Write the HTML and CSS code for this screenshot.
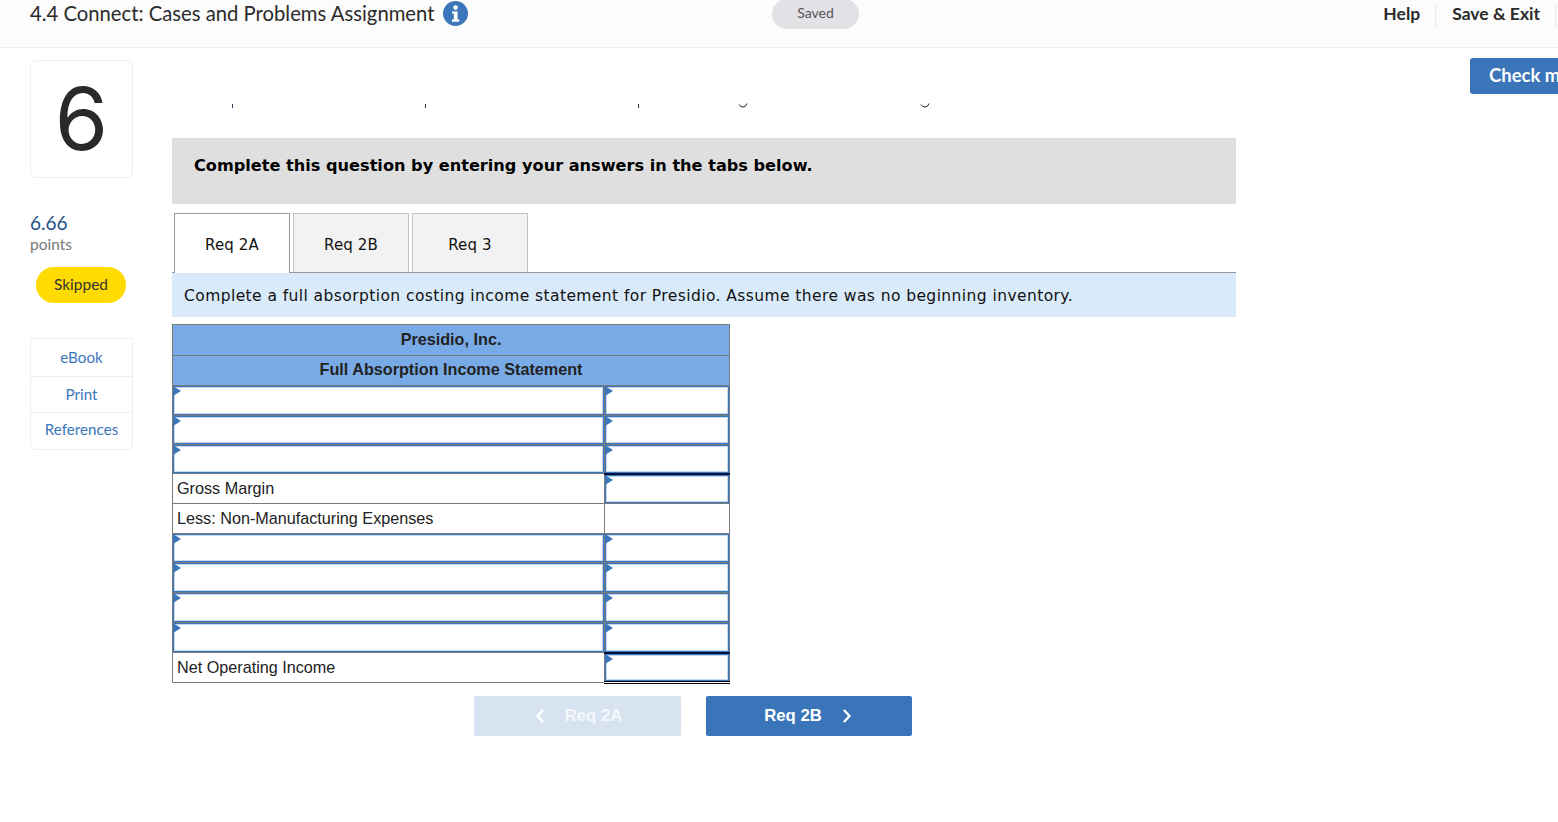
FILE: index.html
```html
<!DOCTYPE html>
<html lang="en">
<head>
<meta charset="utf-8">
<title>4.4 Connect: Cases and Problems Assignment</title>
<link rel="stylesheet" href="styles.css">
</head>
<body>
<header class="topbar">
  <div class="title">
    <span>4.4 Connect: Cases and Problems Assignment</span>
    <svg class="info" viewBox="0 0 25 25" aria-hidden="true"><circle cx="12.5" cy="12.5" r="12.5" fill="#3b76ba"/><circle cx="12.6" cy="6.6" r="2.3" fill="#fff"/><path d="M9 10.400h5.600v8.200h1.700v2.200H9v-2.200h1.800v-6H9z" fill="#fff"/></svg>
  </div>
  <div class="saved">Saved</div>
  <nav class="topnav">
    <a class="topnav-help">Help</a>
    <a class="topnav-save">Save &amp; Exit</a>
  </nav>
</header>
<div class="page">
  <aside class="side">
    <div class="qnum">6</div>
    <div class="pts">6.66</div>
    <div class="pts-label">points</div>
    <div class="pill">Skipped</div>
    <ul class="links">
      <li class="link-a">eBook</li>
      <li class="link-b">Print</li>
      <li class="link-c">References</li>
    </ul>
  </aside>
  <main class="main">
    <svg class="clipped" viewBox="0 0 1064 8" aria-hidden="true">
      <path d="M60.500 4v4M253.500 4v4M466.500 4v4" stroke="#33415f" stroke-width="1" fill="none"/>
      <path d="M567 4.500q1 2.500 4 2.500t4-3.500M749 4.500q1 2.500 4 2.500t4-3.500" stroke="#222" stroke-width="1" fill="none"/>
    </svg>
    <div class="instr">Complete this question by entering your answers in the tabs below.</div>
    <div class="tabs">
      <div class="tab tab-on">Req 2A</div>
      <div class="tab">Req 2B</div>
      <div class="tab">Req 3</div>
    </div>
    <div class="prompt">Complete a full absorption costing income statement for Presidio. Assume there was no beginning inventory.</div>
    <table class="stmt">
      <colgroup><col class="c-label"><col class="c-val"></colgroup>
      <tr class="h31"><th colspan="2">Presidio, Inc.</th></tr>
      <tr class="h30"><th colspan="2">Full Absorption Income Statement</th></tr>
      <tr class="h30"><td><div class="inp"></div></td><td><div class="inp"></div></td></tr>
      <tr class="h29"><td><div class="inp"></div></td><td><div class="inp"></div></td></tr>
      <tr class="h29"><td><div class="inp"></div></td><td><div class="inp"></div></td></tr>
      <tr class="h30"><td class="txt">Gross Margin</td><td class="sub"><div class="inp"></div></td></tr>
      <tr class="h30"><td class="txt">Less: Non-Manufacturing Expenses</td><td></td></tr>
      <tr class="h29"><td><div class="inp"></div></td><td><div class="inp"></div></td></tr>
      <tr class="h30"><td><div class="inp"></div></td><td><div class="inp"></div></td></tr>
      <tr class="h30"><td><div class="inp"></div></td><td><div class="inp"></div></td></tr>
      <tr class="h30"><td><div class="inp"></div></td><td><div class="inp"></div></td></tr>
      <tr class="h30"><td class="txt">Net Operating Income</td><td class="sub total"><div class="inp"></div></td></tr>
    </table>
    <div class="pager">
      <button class="btn btn-off" type="button">
        <svg class="chev" viewBox="0 0 10 14" aria-hidden="true"><path d="M8 1 2.500 7 8 13" fill="none" stroke="#fff" stroke-width="2.400"/></svg>
        <span>Req 2A</span>
      </button>
      <button class="btn btn-on" type="button">
        <span>Req 2B</span>
        <svg class="chev" viewBox="0 0 10 14" aria-hidden="true"><path d="M2 1l5.500 6L2 13" fill="none" stroke="#fff" stroke-width="2.400"/></svg>
      </button>
    </div>
  </main>
  <button class="check" type="button">Check my work</button>
</div>
</body>
</html>
```
FILE: styles.css
```css
* { box-sizing: border-box; }
html, body { margin: 0; padding: 0; height: 100%; overflow: hidden; background: #fff; }
body { font-family: "Lato", "Liberation Sans", sans-serif; color: #222; }

.topbar {
  display: grid;
  grid-template-columns: 772px 87px 1fr;
  height: 48px;
  background: #fcfcfc;
  border-bottom: 1px solid #eee;
}
.title {
  display: flex;
  align-items: center;
  gap: 9px;
  height: 27px;
  padding-left: 30px;
  font-size: 20.250px;
  line-height: 24px;
  color: #2b2b2b;
}
.title span { position: relative; top: -1px; }
.info { width: 25px; height: 25px; flex: none; }
.saved {
  height: 30px;
  margin-top: -1px;
  border-radius: 15px;
  background: #e2e2e6;
  color: #555;
  font-size: 14px;
  line-height: 28px;
  text-align: center;
}
.topnav { display: flex; justify-content: flex-end; align-items: flex-start; padding-top: 3px; font-size: 17.500px; font-weight: 700; color: #2b2b2b; }
.topnav a { display: block; height: 25px; line-height: 22px; }
.topnav-help { padding-right: 15px; border-right: 1px solid #e8e8e8; }
.topnav-save { padding: 0 15px 0 16px; border-right: 1px solid #e8e8e8; margin-right: 2px; }

.page { display: flex; align-items: flex-start; padding-left: 30px; }
.side { width: 103px; flex: none; padding-top: 12px; margin-right: 39px; }
.qnum {
  height: 118px;
  border: 1px solid #eee;
  border-radius: 6px;
  font-family: "Inter", sans-serif;
  font-size: 86px;
  font-weight: 400;
  line-height: 116px;
  text-align: center;
  color: #2a2a2a;
}
.pts { margin-top: 34px; font-size: 19px; line-height: 22px; color: #1f4f86; }
.pts-label { font-size: 15.500px; line-height: 21px; color: #777; }
.pill {
  width: 90px; height: 36px;
  margin: 12px 0 35px 6px;
  border-radius: 18px;
  background: #ffdb00;
  font-size: 15.500px;
  line-height: 35px;
  text-align: center;
  color: #333;
}
.links {
  list-style: none;
  margin: 0; padding: 0;
  border: 1px solid #eee;
  border-radius: 0 0 6px 6px;
  color: #3b76ba;
  font-size: 15.200px;
  text-align: center;
}
.links li + li { border-top: 1px solid #eee; }
.link-a { height: 37px; line-height: 36px; }
.link-b { height: 36px; line-height: 35px; }
.link-c { height: 37px; line-height: 33px; }

.main { width: 1064px; flex: none; padding-top: 52px; }
.clipped { display: block; width: 1064px; height: 8px; }
.instr {
  height: 66px;
  margin-top: 30px;
  padding: 16px 22px;
  background: #dfdfdf;
  font-family: "DejaVu Sans", sans-serif;
  font-weight: 700;
  font-size: 16.150px;
  line-height: 24px;
  color: #000;
}
.tabs { display: flex; gap: 3px; height: 60px; margin-top: 9px; padding-left: 2px; border-bottom: 1px solid #999; }
.tab {
  width: 116px; height: 59px;
  border: 1px solid #c4c4c4;
  border-bottom: 0;
  background: #f2f2f2;
  font-family: "DejaVu Sans", sans-serif;
  font-size: 15px;
  letter-spacing: 0.150px;
  line-height: 62px;
  text-align: center;
  color: #111;
}
.tab-on { height: 60px; background: #fff; border-color: #999; position: relative; }
.prompt {
  height: 44px;
  padding: 0 12px;
  background: #d9ebfa;
  font-family: "DejaVu Sans", sans-serif;
  font-size: 15.500px;
  letter-spacing: 0.420px;
  line-height: 46px;
  color: #111;
}
.stmt {
  width: 557px;
  margin-top: 7px;
  border-collapse: collapse;
  table-layout: fixed;
  font-family: "Liberation Sans", Arial, sans-serif;
  font-size: 16.200px;
  color: #222;
}
.c-label { width: 432px; }
.c-val { width: 125px; }
.stmt th, .stmt td { border: 1px solid #7a7a7a; padding: 0; }
.stmt th { padding-bottom: 2px; background: #78abe6; font-weight: 700; text-align: center; }
.stmt .txt { padding-left: 4px; }
.h31 td, .h31 th { height: 31px; }
.h30 td, .h30 th { height: 30px; }
.h29 td, .h29 th { height: 29px; }
.stmt .sub { border-top: 2px solid #04143f; }
.stmt .total { border-bottom: 3px double #000; }
.inp {
  position: relative;
  height: 100%;
  background: #fff;
  border: 1px solid #3b76ba;
  box-shadow: inset 0 0 0 1px #c4d8f0;
}
.inp::before {
  content: "";
  position: absolute;
  left: -1px; top: -1px;
  border-left: 8px solid #3b76ba;
  border-top: 5px solid transparent;
  border-bottom: 5px solid transparent;
}
.pager { display: flex; gap: 25px; margin-top: 12px; padding-left: 302px; }
.btn {
  display: flex;
  align-items: center;
  justify-content: center;
  gap: 20px;
  width: 206px; height: 40px;
  padding: 0;
  border: 0;
  border-radius: 2px;
  background: #3a75b9;
  font-family: "Liberation Sans", Arial, sans-serif;
  font-size: 16.700px;
  font-weight: 700;
  color: #fff;
}
.btn-on { padding-right: 2px; }
.btn-off { width: 207px; padding-left: 2px; background: #d8e3f1; color: #f4f7fb; }
.chev { width: 10px; height: 14px; }
.check {
  flex: none;
  width: 140px; height: 36px;
  margin: 10px 0 0 234px;
  padding: 0 0 2px 19px;
  border: 0;
  border-radius: 3px 0 0 3px;
  background: #3a75b9;
  font-family: "Lato", sans-serif;
  font-size: 18.500px;
  font-weight: 700;
  color: #fff;
  text-align: left;
  white-space: nowrap;
}
```
